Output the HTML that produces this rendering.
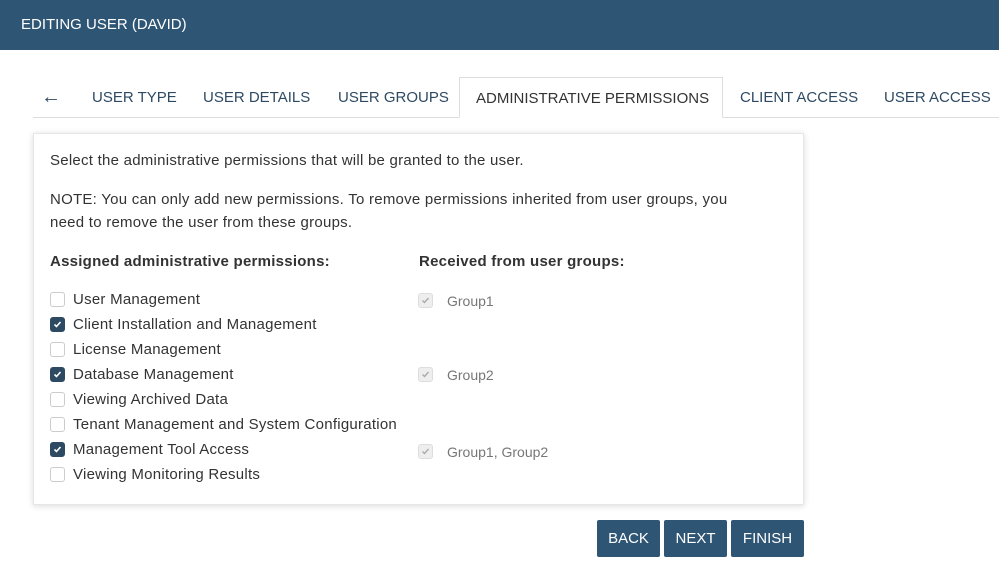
<!DOCTYPE html>
<html><head><style>
*{margin:0;padding:0;box-sizing:border-box}
body{width:999px;height:570px;background:#fff;font-family:"Liberation Sans",sans-serif;color:#333;position:relative;overflow:hidden}
.hdr{position:absolute;left:0;top:0;width:999px;height:50px;background:#2e5574;color:#fff;font-size:15px;line-height:50px;padding-left:21px}
.tabs{position:absolute;left:33px;top:77px;width:966px;height:41px;border-bottom:1px solid #ddd}
.tab{position:absolute;top:0;height:41px;line-height:42px;font-size:15px;color:#2e4a63;white-space:nowrap}
.tab.act{border:1px solid #ddd;border-bottom:1px solid #fff;background:#fff;padding:0 16px;color:#333;height:41px}
.card{position:absolute;left:33px;top:133px;width:771px;height:372px;background:#fff;border:1px solid #e6e6e6;box-shadow:0 1px 6px rgba(0,0,0,.15)}
.t{position:absolute;font-size:15px;color:#333;white-space:nowrap;letter-spacing:0.25px}
.b{font-weight:bold}
.cb{position:absolute;width:15px;height:15px;border:1px solid #ccc;border-radius:3px;background:#fff}
.cb.on{background:#2e4a63;border-color:#2e4a63}
.cb.dis{background:#eee;border-color:#ddd}
.cb svg{position:absolute;left:2px;top:2px}
.g{position:absolute;font-size:14px;color:#777}
.btn{position:absolute;top:520px;height:37px;background:#2e5574;color:#fff;font-size:15px;line-height:37px;text-align:center;border-radius:2px}
</style></head><body>
<div class="hdr">EDITING USER (DAVID)</div>
<div class="tabs">
<div class="tab" style="left:8px;font-size:20px;line-height:40px;color:#2e4a63">&#8592;</div>
<div class="tab" style="left:59px">USER TYPE</div>
<div class="tab" style="left:170px">USER DETAILS</div>
<div class="tab" style="left:305px">USER GROUPS</div>
<div class="tab act" style="left:426px;width:264px">ADMINISTRATIVE PERMISSIONS</div>
<div class="tab" style="left:707px">CLIENT ACCESS</div>
<div class="tab" style="left:851px">USER ACCESS</div>
</div>
<div class="card"></div>
<div class="t" style="left:50px;top:152px">Select the administrative permissions that will be granted to the user.</div>
<div class="t" style="left:50px;top:191px">NOTE: You can only add new permissions. To remove permissions inherited from user groups, you</div>
<div class="t" style="left:50px;top:214px">need to remove the user from these groups.</div>
<div class="t b" style="left:50px;top:253px">Assigned administrative permissions:</div>
<div class="t b" style="left:419px;top:253px">Received from user groups:</div>

<div class="cb" style="left:50px;top:292px"></div><div class="t" style="left:73px;top:291px">User Management</div>
<div class="cb on" style="left:50px;top:317px"><svg width="9" height="9" viewBox="0 0 9 9"><path d="M1.5 4.5l2 2 4-4.5" stroke="#fff" stroke-width="1.6" fill="none"/></svg></div><div class="t" style="left:73px;top:316px">Client Installation and Management</div>
<div class="cb" style="left:50px;top:342px"></div><div class="t" style="left:73px;top:341px">License Management</div>
<div class="cb on" style="left:50px;top:367px"><svg width="9" height="9" viewBox="0 0 9 9"><path d="M1.5 4.5l2 2 4-4.5" stroke="#fff" stroke-width="1.6" fill="none"/></svg></div><div class="t" style="left:73px;top:366px">Database Management</div>
<div class="cb" style="left:50px;top:392px"></div><div class="t" style="left:73px;top:391px">Viewing Archived Data</div>
<div class="cb" style="left:50px;top:417px"></div><div class="t" style="left:73px;top:416px">Tenant Management and System Configuration</div>
<div class="cb on" style="left:50px;top:442px"><svg width="9" height="9" viewBox="0 0 9 9"><path d="M1.5 4.5l2 2 4-4.5" stroke="#fff" stroke-width="1.6" fill="none"/></svg></div><div class="t" style="left:73px;top:441px">Management Tool Access</div>
<div class="cb" style="left:50px;top:467px"></div><div class="t" style="left:73px;top:466px">Viewing Monitoring Results</div>

<div class="cb dis" style="left:418px;top:293px"><svg width="9" height="9" viewBox="0 0 9 9"><path d="M1.5 4.5l2 2 4-4.5" stroke="#aaa" stroke-width="1.4" fill="none"/></svg></div><div class="g" style="left:447px;top:293px">Group1</div>
<div class="cb dis" style="left:418px;top:367px"><svg width="9" height="9" viewBox="0 0 9 9"><path d="M1.5 4.5l2 2 4-4.5" stroke="#aaa" stroke-width="1.4" fill="none"/></svg></div><div class="g" style="left:447px;top:367px">Group2</div>
<div class="cb dis" style="left:418px;top:444px"><svg width="9" height="9" viewBox="0 0 9 9"><path d="M1.5 4.5l2 2 4-4.5" stroke="#aaa" stroke-width="1.4" fill="none"/></svg></div><div class="g" style="left:447px;top:444px">Group1, Group2</div>

<div class="btn" style="left:597px;width:63px">BACK</div>
<div class="btn" style="left:664px;width:63px">NEXT</div>
<div class="btn" style="left:731px;width:73px">FINISH</div>
</body></html>
